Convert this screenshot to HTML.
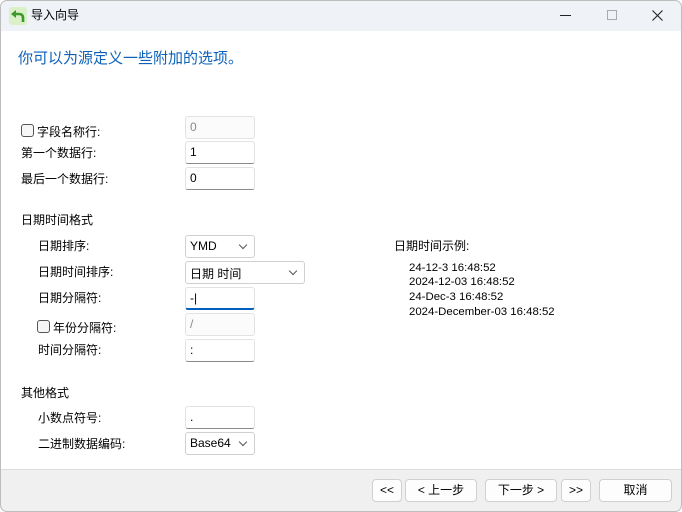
<!DOCTYPE html>
<html><head><meta charset="utf-8"><style>
*{margin:0;padding:0;box-sizing:border-box}
body{width:682px;height:512px;overflow:hidden;background:#fff;font-family:"Segoe UI","Liberation Sans","Noto Sans CJK SC",sans-serif;font-size:12px;color:#000;position:relative}
.a{position:absolute;white-space:nowrap}
.win{position:absolute;left:0;top:0;width:682px;height:512px;border-radius:7px;overflow:hidden;background:#fff}
.frame{position:absolute;left:0;top:0;width:682px;height:512px;border:1px solid #bdbdbd;border-radius:7px;pointer-events:none}
.title{position:absolute;left:0;top:0;width:682px;height:31px;background:#eff3f8}
.inp{position:absolute;width:70px;height:23px;border:1px solid #e2e2e2;border-bottom:1px solid #8a8a8a;border-radius:3px;background:#fff;padding:3px 0 0 4px;font-size:12px}
.dis{border-bottom:1px solid #e2e2e2;color:#888;background:#fbfbfb}
.sel{border:1px solid #d0d0d0;border-radius:3px}
.sel:after{content:"";position:absolute;right:8px;top:6px;width:5px;height:5px;border-right:1px solid #555;border-bottom:1px solid #555;transform:rotate(45deg)}
.cb{position:absolute;width:13px;height:13px;border:1px solid #555;border-radius:3px;background:#f6f6f6}
.btn{position:absolute;top:479px;height:23px;border:1px solid #d0d0d0;border-radius:4px;background:#fdfdfd;text-align:center;line-height:21px;font-size:12px}
.foot{position:absolute;left:0;top:469px;width:682px;height:43px;background:#f0f0f0;border-top:1px solid #dcdcdc}
.ex{font-size:11.4px}
</style></head><body>
<div class="win">
<div class="title"></div>
<svg class="a" style="left:9px;top:7px" width="18" height="18" viewBox="0 0 18 18"><rect x="0" y="0" width="18" height="18" rx="3" fill="#d9f0c8"/><path d="M5 7 L10 7 Q14 7 14 11 L14 15" stroke="#3c9a2c" stroke-width="2.6" fill="none"/><path d="M2 7 L7 3 L7 11 Z" fill="#3c9a2c"/></svg>
<div class="a" style="left:31px;top:6px;font-size:12px">导入向导</div>
<div class="a" style="left:560px;top:15px;width:11px;height:1px;background:#222"></div>
<div class="a" style="left:607px;top:10px;width:10px;height:10px;border:1px solid #aaa"></div>
<svg class="a" style="left:652px;top:10px" width="11" height="11" viewBox="0 0 11 11"><path d="M0.5 0.5 L10.5 10.5 M10.5 0.5 L0.5 10.5" stroke="#222" stroke-width="1.1"/></svg>

<div class="a" style="left:18px;top:47px;font-size:15px;color:#0d62b8">你可以为源定义一些附加的选项。</div>

<div class="cb" style="left:21px;top:124px"></div>
<div class="a" style="left:37px;top:123px">字段名称行:</div>
<div class="inp dis" style="left:185px;top:116px">0</div>
<div class="a" style="left:21px;top:144px">第一个数据行:</div>
<div class="inp" style="left:185px;top:141px">1</div>
<div class="a" style="left:21px;top:170px">最后一个数据行:</div>
<div class="inp" style="left:185px;top:167px">0</div>

<div class="a" style="left:21px;top:211px">日期时间格式</div>
<div class="a" style="left:38px;top:237px">日期排序:</div>
<div class="inp sel" style="left:185px;top:235px">YMD</div>
<div class="a" style="left:38px;top:263px">日期时间排序:</div>
<div class="inp sel" style="left:185px;top:261px;width:120px">日期 时间</div>
<div class="a" style="left:38px;top:289px">日期分隔符:</div>
<div class="inp" style="left:185px;top:287px;border-bottom:2px solid #0060c0">-|</div>
<div class="cb" style="left:37px;top:320px"></div>
<div class="a" style="left:53px;top:319px">年份分隔符:</div>
<div class="inp dis" style="left:185px;top:313px">/</div>
<div class="a" style="left:38px;top:341px">时间分隔符:</div>
<div class="inp" style="left:185px;top:339px">:</div>

<div class="a" style="left:394px;top:237px">日期时间示例:</div>
<div class="a ex" style="left:409px;top:262px">24-12-3 16:48:52</div>
<div class="a ex" style="left:409px;top:276px">2024-12-03 16:48:52</div>
<div class="a ex" style="left:409px;top:291px">24-Dec-3 16:48:52</div>
<div class="a ex" style="left:409px;top:306px">2024-December-03 16:48:52</div>

<div class="a" style="left:21px;top:384px">其他格式</div>
<div class="a" style="left:38px;top:409px">小数点符号:</div>
<div class="inp" style="left:185px;top:406px">.</div>
<div class="a" style="left:38px;top:435px">二进制数据编码:</div>
<div class="inp sel" style="left:185px;top:432px">Base64</div>

<div class="foot"></div>
<div class="btn" style="left:372px;width:30px">&lt;&lt;</div>
<div class="btn" style="left:405px;width:72px">&lt; 上一步</div>
<div class="btn" style="left:485px;width:72px">下一步 &gt;</div>
<div class="btn" style="left:561px;width:30px">&gt;&gt;</div>
<div class="btn" style="left:599px;width:73px">取消</div>
</div>
<div class="frame"></div>
</body></html>
